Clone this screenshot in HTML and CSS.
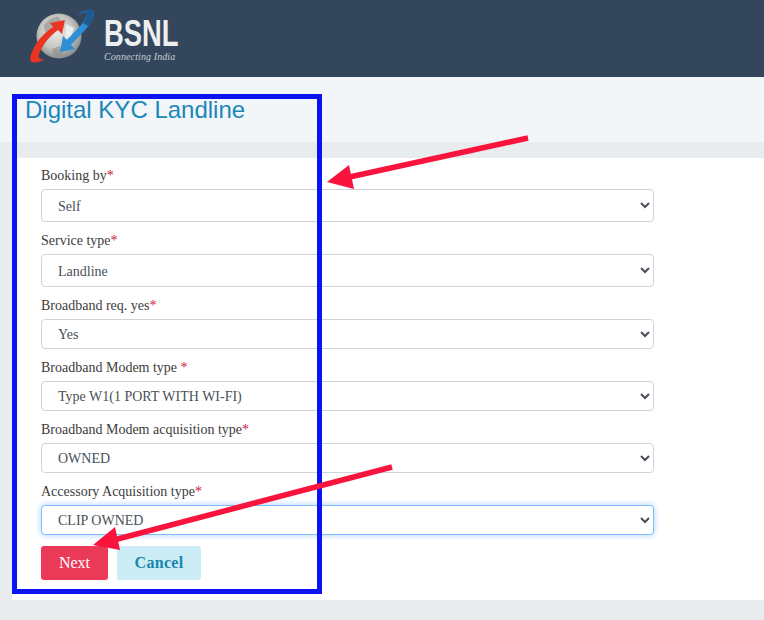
FILE: index.html
```html
<!DOCTYPE html>
<html lang="en">
<head>
<meta charset="utf-8">
<title>Digital KYC Landline</title>
<link rel="stylesheet" href="styles.css">
</head>
<body>
<div class="page">
  <header class="topbar">
    <svg class="logo" width="72" height="77" viewBox="25 0 72 77" role="img" aria-label="BSNL globe">
      <defs>
        <radialGradient id="globe" cx="0.45" cy="0.42" r="0.62">
          <stop offset="0" stop-color="#e9e9e7"/>
          <stop offset="0.6" stop-color="#c4c4c0"/>
          <stop offset="1" stop-color="#7f8284"/>
        </radialGradient>
      </defs>
      <circle cx="59" cy="36" r="22.5" fill="url(#globe)"/>
      <path d="M44 25c5-6 10-8 15-8l2 4-8 3-2 6-6 2zM52 49l8-3 4 4-3 6-7-1z" fill="#8d8e8c" opacity=".6"/>
      <path d="M66 24l8 4-3 8-6 3z" fill="#f4f4f2" opacity=".8"/>
      <path d="M32 62c-3-1-2-7 2-14 3-7 10-15 19-21l-3-4 15-3-3 14-4-4c-8 6-13 12-16 18-3 5-4 8-3 10 1 1 3 2 6 1-4 3-10 4-13 3z" fill="#ea3522"/>
      <path d="M92 10c-5-1-10 1-14 5 4-2 8-3 10-2l-6 11-15 16-4-4-3 16 15-3-4-4 15-16c4-5 7-10 8-15 0-2-1-4-2-4z" fill="#2e8fd8"/>
      <path d="M92 10c-5-1-10 1-14 5 4-2 8-3 10-2l-5 10 5 3c3-4 5-8 6-12 0-2-1-4-2-4z" fill="#1d5a94"/>
    </svg>
    <div class="brand">
      <span class="brand-name">BSNL</span>
      <span class="brand-tag">Connecting India</span>
    </div>
  </header>

  <section class="title-bar">
    <h1 class="title">Digital KYC Landline</h1>
  </section>
  <div class="band"></div>

  <main class="card">
    <form class="form">
      <div class="field">
        <label class="label" for="f1">Booking by<span class="req">*</span></label>
        <select class="select select-tall" id="f1"><option>Self</option></select>
      </div>
      <div class="field">
        <label class="label" for="f2">Service type<span class="req">*</span></label>
        <select class="select select-tall" id="f2"><option>Landline</option></select>
      </div>
      <div class="field">
        <label class="label" for="f3">Broadband req. yes<span class="req">*</span></label>
        <select class="select" id="f3"><option>Yes</option></select>
      </div>
      <div class="field">
        <label class="label" for="f4">Broadband Modem type <span class="req">*</span></label>
        <select class="select" id="f4"><option>Type W1(1 PORT WITH WI-FI)</option></select>
      </div>
      <div class="field">
        <label class="label" for="f5">Broadband Modem acquisition type<span class="req">*</span></label>
        <select class="select" id="f5"><option>OWNED</option></select>
      </div>
      <div class="field">
        <label class="label" for="f6">Accessory Acquisition type<span class="req">*</span></label>
        <select class="select select-focus" id="f6"><option>CLIP OWNED</option></select>
      </div>
      <div class="actions">
        <button class="btn btn-next" type="button">Next</button>
        <button class="btn btn-cancel" type="button">Cancel</button>
      </div>
    </form>
  </main>
  <div class="foot"></div>

  <svg class="overlay" width="764" height="620" viewBox="0 0 764 620" aria-hidden="true">
    <rect class="mark-box" x="14.5" y="96.5" width="305" height="495"/>
    <path class="mark-line" d="M528 138 345 178"/>
    <path class="mark-head" d="M327 182 349 165 354 189z"/>
    <path class="mark-line" d="M392 467 110 541"/>
    <path class="mark-head" d="M93 545 115 527 120 550z"/>
  </svg>
</div>
</body>
</html>
```
FILE: styles.css
```css
* { box-sizing: border-box; }
html, body { margin: 0; padding: 0; }
body { background: #e9ecef; font-family: "Liberation Serif", "Times New Roman", serif; overflow: hidden; }
.page { position: relative; width: 764px; height: 620px; overflow: hidden; }
.topbar { display: flex; height: 77px; padding-left: 25px; background: #34465c; }
.logo { display: block; flex: none; }
.brand { display: flex; flex-direction: column; align-items: flex-start; margin-left: 7px; padding-top: 18px; }
.brand-name { display: block; font-family: "Liberation Sans", Arial, sans-serif; font-weight: 700; font-size: 37px; line-height: 31px; color: #eceff1; transform: scaleX(.74); transform-origin: left center; width: 75px; white-space: nowrap; }
.brand-tag { display: block; margin-top: 2px; font-family: "Liberation Serif", serif; font-style: italic; font-size: 10px; line-height: 12px; letter-spacing: .1px; color: #c4ccd4; white-space: nowrap; }
.title-bar { height: 65px; background: #f3f6f9; padding: 20px 0 0 25px; }
.title { margin: 0; font-family: "Liberation Sans", Arial, sans-serif; font-weight: 400; font-size: 24px; line-height: 26px; color: #1b87b9; }
.band { height: 16px; background: #e9ecef; }
.card { margin-left: 12px; height: 442px; background: #fff; padding: 7px 100px 0 29px; }
.form { width: 613px; }
.field { margin-bottom: 8px; }
.label { display: block; height: 21px; margin-bottom: 3px; font-size: 14px; line-height: 21px; color: #3c3c3c; }
.req { color: #d0173c; }
.select { display: block; width: 100%; height: 30px; padding: 0 12px; border: 1px solid #ced4da; border-radius: 4px; background-color: #fff; font-family: inherit; font-size: 14px; color: #495057; }
.select-tall { height: 33px; padding-top: 2px; }
.select-focus { border-color: #80bdff; box-shadow: 0 0 4px 2px rgba(0, 123, 255, .2); outline: 0; }
.actions { display: flex; gap: 9px; margin-top: 11px; }
.btn { height: 34px; border: 0; border-radius: 3px; font-family: inherit; font-size: 16px; padding: 0; }
.btn-next { width: 67px; background: #ea3a58; color: #fff; }
.btn-cancel { width: 84px; background: #ccecf6; color: #1687ac; font-weight: 700; letter-spacing: .3px; }
.foot { height: 20px; background: #e9ecef; }
.overlay { position: absolute; left: 0; top: 0; pointer-events: none; }
.mark-box { fill: none; stroke: #0b14f0; stroke-width: 5; }
.mark-line { fill: none; stroke: #f8143c; stroke-width: 5.5; }
.mark-head { fill: #f8143c; }
```
